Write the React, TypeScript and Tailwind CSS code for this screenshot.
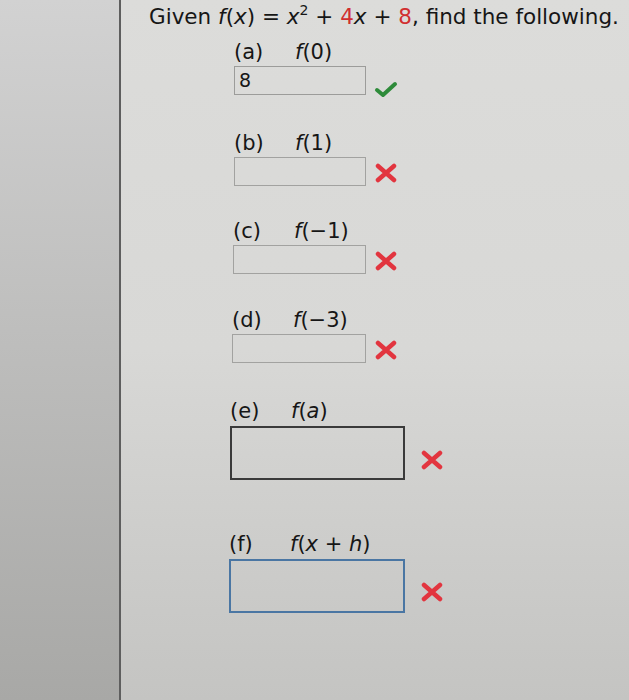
import React from 'react'

function Check() {
  return (
    <svg width="24" height="18" viewBox="0 0 24 18" className="block">
      <path d="M3 10 L9 15 L21 4" fill="none" stroke="#2e8b3a" strokeWidth="4" strokeLinecap="round" strokeLinejoin="round" />
    </svg>
  )
}

function Cross() {
  return (
    <svg width="22" height="20" viewBox="0 0 22 20" className="block">
      <path d="M3 3 L19 17 M19 3 L3 17" fill="none" stroke="#e2353f" strokeWidth="4.5" strokeLinecap="round" />
    </svg>
  )
}

const I = ({ children }: { children: React.ReactNode }) => <i className="italic">{children}</i>

type Part = {
  letter: string
  expr: React.ReactNode
  mt: string
  shift: string
  boxMt: string
  box: string
  value?: string
  ok?: boolean
  iconGap: string
  iconShift: string
}

const parts: Part[] = [
  { letter: 'a', expr: <><I>f</I>(0)</>, mt: 'mt-[9px]', shift: '', boxMt: 'mt-[2px]', box: 'w-[132px] h-[29px] border border-[#9c9c9a]', value: '8', ok: true, iconGap: 'ml-[8px]', iconShift: 'mt-[14px]' },
  { letter: 'b', expr: <><I>f</I>(1)</>, mt: 'mt-[33px]', shift: '', boxMt: 'mt-[2px]', box: 'w-[132px] h-[29px] border border-[#a2a2a0]', iconGap: 'ml-[9px]', iconShift: 'mt-[6px]' },
  { letter: 'c', expr: <><I>f</I>(−1)</>, mt: 'mt-[33px]', shift: '-ml-[1px]', boxMt: 'mt-[2px]', box: 'w-[133px] h-[29px] border border-[#a2a2a0]', iconGap: 'ml-[9px]', iconShift: 'mt-[6px]' },
  { letter: 'd', expr: <><I>f</I>(−3)</>, mt: 'mt-[34px]', shift: '-ml-[2px]', boxMt: 'mt-[2px]', box: 'w-[134px] h-[29px] border border-[#a2a2a0]', iconGap: 'ml-[9px]', iconShift: 'mt-[6px]' },
  { letter: 'e', expr: <><I>f</I>(<I>a</I>)</>, mt: 'mt-[36px]', shift: '-ml-[4px]', boxMt: 'mt-[3px]', box: 'w-[175px] h-[54px] border-2 border-[#3a3a3a]', iconGap: 'ml-[16px]', iconShift: 'mt-[24px]' },
  { letter: 'f', expr: <><I>f</I>(<I>x</I> + <I>h</I>)</>, mt: 'mt-[52px]', shift: '-ml-[5px]', boxMt: 'mt-[3px]', box: 'w-[176px] h-[54px] border-2 border-[#4a76a3]', iconGap: 'ml-[16px]', iconShift: 'mt-[23px]' },
]

export default function App() {
  return (
    <div
      className="w-[629px] h-[700px] flex overflow-hidden bg-gradient-to-b from-[#dcdcda] via-[#d8d8d6] to-[#c4c4c2] text-[#161616]"
      style={{ fontFamily: '"DejaVu Sans", Verdana, sans-serif' }}
    >
      {/* left sidebar */}
      <div className="w-[121px] shrink-0 border-r-2 border-[#5e5e5e] bg-gradient-to-b from-[#d2d2d2] to-[#a8a8a6]" />

      <div className="flex-1 pl-[28px] pt-[3px]">
        <div className="text-[21.5px] leading-[28px] whitespace-nowrap">
          Given <I>f</I>(<I>x</I>) = <I>x</I>
          <sup className="text-[14px] relative -top-[9px]">2</sup> + <span className="text-[#d12f2f]">4</span>
          <I>x</I> + <span className="text-[#d12f2f]">8</span>, find the following.
        </div>

        <div className="ml-[85px] flex flex-col">
          {parts.map((p) => (
            <div key={p.letter} className={`${p.mt} ${p.shift}`}>
              <div className="flex text-[21px] leading-[24px]">
                <span className="w-[61px]">({p.letter})</span>
                <span>{p.expr}</span>
              </div>
              <div className={`flex items-start ${p.boxMt}`}>
                <div className={`${p.box} flex items-center pl-[4px] text-[19px]`}>{p.value}</div>
                <div className={`${p.iconGap} ${p.iconShift}`}>{p.ok ? <Check /> : <Cross />}</div>
              </div>
            </div>
          ))}
        </div>
      </div>
    </div>
  )
}
